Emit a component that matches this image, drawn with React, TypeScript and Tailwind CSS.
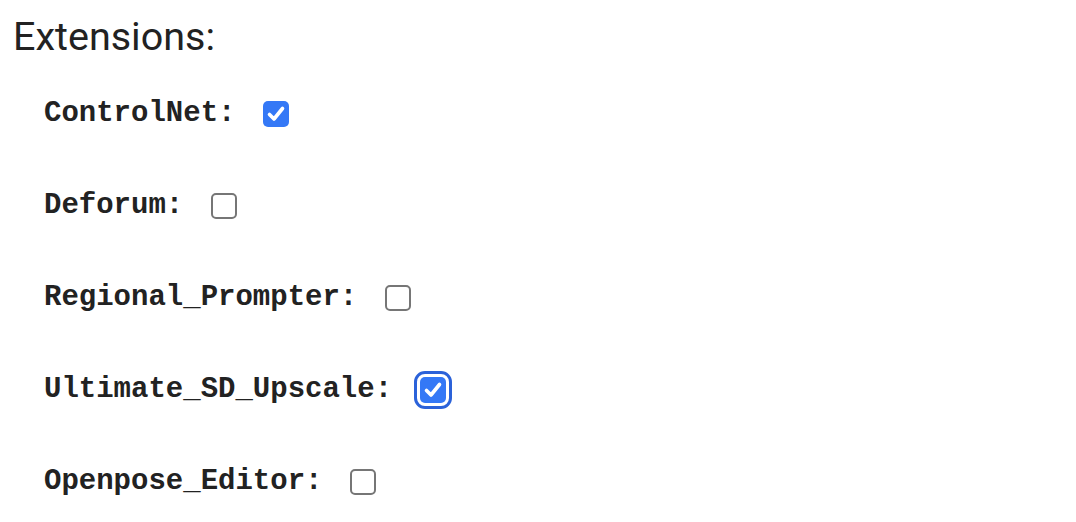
// extension toggles as shown in the settings panel
const EXTENSIONS = [
  { name: 'ControlNet', checked: true, focused: false },
  { name: 'Deforum', checked: false, focused: false },
  { name: 'Regional_Prompter', checked: false, focused: false },
  { name: 'Ultimate_SD_Upscale', checked: true, focused: true },
  { name: 'Openpose_Editor', checked: false, focused: false },
]

function Box({ checked, focused }: { checked: boolean; focused: boolean }) {
  const ring = focused ? 'outline-[3px] outline-solid outline-[#2b62d9] outline-offset-[3px]' : ''
  if (checked) {
    return (
      <div className={`w-[26px] h-[26px] rounded-[5px] bg-[#3478f6] flex items-center justify-center ${ring}`}>
        <svg width="26" height="26" viewBox="0 0 26 26">
          <path d="M6.5 13.5 L11 18 L19.5 7.5" fill="none" stroke="white" strokeWidth="3.6" strokeLinecap="round" strokeLinejoin="round" />
        </svg>
      </div>
    )
  }
  return <div className={`w-[26px] h-[26px] rounded-[5px] border-2 border-[#767676] bg-white ${ring}`} />
}

export default function App() {
  return (
    <div className="w-[1076px] h-[522px] bg-white overflow-hidden">
      <div className="h-[68px] pl-[13px] pt-[14px]">
        <h2 className="text-[39.5px] leading-[46px] text-[#222] font-['Roboto',sans-serif]">Extensions:</h2>
      </div>
      <div className="pl-[44px] flex flex-col">
        {EXTENSIONS.map((ext) => (
          <div key={ext.name} className="h-[92px] flex items-center gap-[28px]">
            <span className="font-['Liberation_Mono','Courier_New',monospace] font-bold text-[29px] text-[#222]">
              {ext.name}:
            </span>
            <Box checked={ext.checked} focused={ext.focused} />
          </div>
        ))}
      </div>
    </div>
  )
}
